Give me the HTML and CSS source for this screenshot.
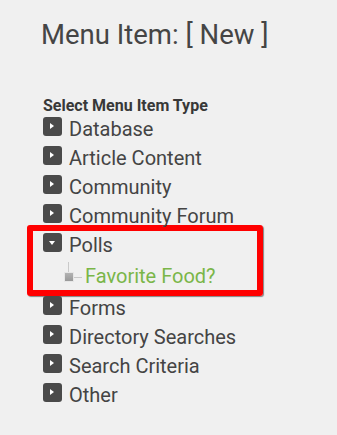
FILE: index.html
```html
<!DOCTYPE html>
<html lang="en">
<head>
  <meta charset="UTF-8" />
  <meta name="viewport" content="width=device-width, initial-scale=1.0"/>
  <title>Menu Item: [ New ]</title>
  <link rel="stylesheet" href="styles.css">
</head>
<body>

  <h1 class="page-title">Menu Item: [ New ]</h1>

  <div class="type-picker">
    <div class="type-label">Select Menu Item Type</div>

    <div class="type-row"><span class="toggle"></span>Database</div>
    <div class="type-row"><span class="toggle"></span>Article Content</div>
    <div class="type-row"><span class="toggle"></span>Community</div>
    <div class="type-row"><span class="toggle"></span>Community Forum</div>

    <!-- highlighted group -->
    <div class="highlight">
      <div class="type-row"><span class="toggle open"></span>Polls</div>
      <div class="type-row child">
        <svg class="branch" width="42" height="28" viewBox="0 0 42 28">
          <defs>
            <linearGradient id="nodeFill" x1="0" y1="0" x2="0" y2="1">
              <stop offset="0" stop-color="#b4b4b4"/>
              <stop offset="1" stop-color="#979797"/>
            </linearGradient>
          </defs>
          <line x1="25.5" y1="0" x2="25.5" y2="10" stroke="#c9c9c9" stroke-width="1"/>
          <rect x="21.5" y="10.5" width="9" height="9" fill="url(#nodeFill)" stroke="#e6e6e6" stroke-width="1"/>
          <line x1="31" y1="15.5" x2="39" y2="15.5" stroke="#c9c9c9" stroke-width="1"/>
        </svg>
        <span class="child-link">Favorite Food?</span>
      </div>
    </div>

    <div class="type-row"><span class="toggle"></span>Forms</div>
    <div class="type-row"><span class="toggle"></span>Directory Searches</div>
    <div class="type-row"><span class="toggle"></span>Search Criteria</div>
    <div class="type-row"><span class="toggle"></span>Other</div>
  </div>

</body>
</html>
```

FILE: styles.css
```css
* { box-sizing: border-box; margin: 0; padding: 0; }
body {
  font-family: Roboto, "Liberation Sans", sans-serif;
  background: #f0f0f0;
  color: #444;
}
.page-title {
  font-size: 27.5px; font-weight: 400; line-height: 40px;
  color: #454545;
  padding: 15px 0 0 41px;
}
.type-picker { padding-left: 43px; }
.type-label {
  margin-top: 41px;
  font-size: 16px; font-weight: 700; line-height: 19px;
  color: #383838;
}
.type-row {
  display: flex; align-items: flex-start;
  height: 29px; line-height: 29px;
  font-size: 20px; color: #444;
}
.toggle {
  position: relative;
  flex: none; width: 19px; height: 19px; margin: 2px 7px 0 0;
  background: #4a4a4a; border-radius: 3px;
}
/* little white arrow */
.toggle::after {
  content: ""; position: absolute; left: 7px; top: 6px;
  border-left: 4.5px solid #fff;
  border-top: 3.5px solid transparent;
  border-bottom: 3.5px solid transparent;
}
.toggle.open::after {
  left: 6px; top: 7.5px;
  border-top: 4.5px solid #fff;
  border-left: 3.5px solid transparent;
  border-right: 3.5px solid transparent;
  border-bottom: 0;
}
.highlight {
  width: 236px;
  margin: -6px 0 -2px -16px;
  padding-left: 10px;
  border: 6px solid #ff0000;
  border-radius: 3px;
  box-shadow: 1px 1px 1px rgba(0,0,0,0.45);
}
.type-row.child { height: 28px; margin-top: 2px; }
.branch { flex: none; display: block; }
.child-link { color: #7ab648; }
```
